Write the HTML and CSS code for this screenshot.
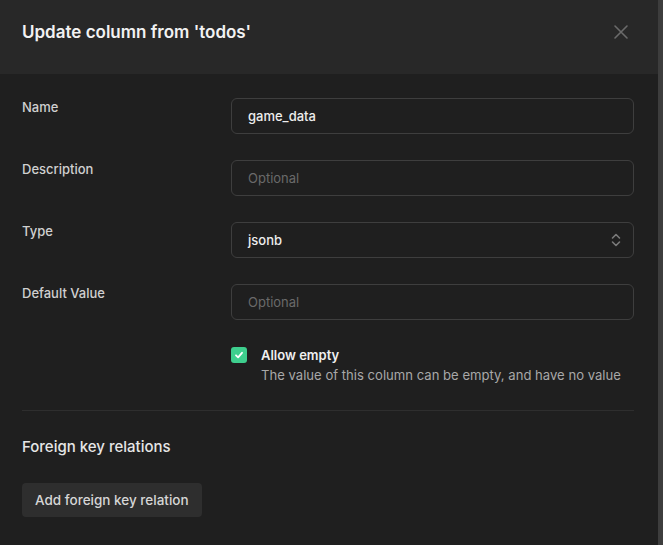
FILE: index.html
```html
<!DOCTYPE html>
<html>
<head>
<meta charset="utf-8">
<link rel="stylesheet" href="styles.css">
</head>
<body>
<div class="panel">
  <div class="main">
    <header class="header">
      <h1 class="title">Update column from 'todos'</h1>
      <button class="close" aria-label="Close">
        <svg width="16" height="16" viewBox="0 0 16 16" fill="none" stroke="#6b6b6b" stroke-width="1.6" stroke-linecap="round"><path d="M2 2L14 14M14 2L2 14"/></svg>
      </button>
    </header>
    <div class="body">
      <div class="row">
        <label class="label">Name</label>
        <div class="field"><div class="input value">game_data</div></div>
      </div>
      <div class="row">
        <label class="label">Description</label>
        <div class="field"><div class="input placeholder">Optional</div></div>
      </div>
      <div class="row">
        <label class="label">Type</label>
        <div class="field"><div class="input value select">jsonb
          <svg class="chev" width="10" height="16" viewBox="0 0 10 16" fill="none" stroke="#7a7a7a" stroke-width="1.6" stroke-linecap="round" stroke-linejoin="round"><path d="M1.5 6L5 2.5L8.5 6M1.5 10L5 13.5L8.5 10"/></svg>
        </div></div>
      </div>
      <div class="row">
        <label class="label">Default Value</label>
        <div class="field"><div class="input placeholder">Optional</div></div>
      </div>
      <div class="check-row">
        <span class="checkbox">
          <svg width="10" height="10" viewBox="0 0 10 10" fill="none" stroke="#fff" stroke-width="1.8" stroke-linecap="round" stroke-linejoin="round"><path d="M2 5.3L4.1 7.3L8 2.8"/></svg>
        </span>
        <div class="check-text">
          <div class="check-title">Allow empty</div>
          <div class="check-desc">The value of this column can be empty, and have no value</div>
        </div>
      </div>
      <hr class="divider">
      <h2 class="section">Foreign key relations</h2>
      <button class="btn">Add foreign key relation</button>
    </div>
  </div>
  <div class="scrollbar"></div>
</div>
</body>
</html>
```
FILE: styles.css
```css
* { box-sizing: border-box; }
html, body { margin: 0; padding: 0; }
body {
  background: #1f1f1f;
  font-family: "Inter", "Lato", sans-serif;
  color: #ededed;
  width: 663px;
  height: 545px;
  overflow: hidden;
}
.panel { display: flex; height: 545px; }
.main { flex: 1; background: #1f1f1f; }
.scrollbar { width: 5px; background: #3d3d3d; }
.header {
  height: 74px;
  background: #282828;
  display: flex;
  align-items: flex-start;
  justify-content: space-between;
  padding: 21px 29px 0 22px;
}
.title {
  margin: 0;
  font-size: 17px;
  line-height: 22px;
  font-weight: 600;
  color: #f2f2f2;
}
.close { background: none; border: 0; padding: 0; display: flex; margin-top: 3px; }
.body { padding: 24px 24px 0 22px; }
.row { display: flex; margin-bottom: 26px; }
.label {
  width: 209px;
  font-size: 13px;
  font-weight: 500;
  color: #d0d0d0;
  padding-top: 1px;
}
.field { flex: 1; }
.input {
  height: 36px;
  border: 1px solid #3e3e3e;
  border-radius: 6px;
  padding: 0 16px;
  display: flex;
  align-items: center;
  font-size: 13px;
}
.value { color: #ededed; font-weight: 500; }
.placeholder { color: #6a6a6a; }
.select { justify-content: space-between; padding-right: 12px; }
.check-row { display: flex; padding-left: 209px; margin-top: 0; }
.checkbox {
  width: 16px; height: 16px;
  background: #3ecf8e;
  border-radius: 3px;
  display: flex; align-items: center; justify-content: center;
  margin-top: 1px;
}
.check-text { margin-left: 14px; }
.check-title { font-size: 13px; font-weight: 600; color: #f0f0f0; line-height: 18px; }
.check-desc { font-size: 13.1px; color: #a8a8a8; line-height: 20px; margin-top: 1px; }
.divider { border: 0; border-top: 1px solid #2e2e2e; margin: 25px 0 0 0; }
.section { margin: 26px 0 0 0; font-size: 15px; font-weight: 500; color: #e6e6e6; }
.btn {
  margin-top: 27px;
  background: #2e2e2e;
  border: 0;
  border-radius: 4px;
  height: 34px;
  padding: 0 13px;
  font-family: inherit;
  font-size: 13.5px;
  font-weight: 500;
  color: #d6d6d6;
}
```
